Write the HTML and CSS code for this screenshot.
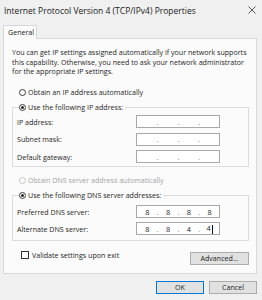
FILE: index.html
```html
<!DOCTYPE html>
<html>
<head>
<meta charset="utf-8">
<link rel="stylesheet" href="styles.css">
</head>
<body>
<div class="window">
  <div class="titlebar">
    <span class="title">Internet Protocol Version 4 (TCP/IPv4) Properties</span>
    <svg class="close" width="8" height="8" viewBox="0 0 8 8"><path d="M0.5 0.5L7.5 7.5M7.5 0.5L0.5 7.5" stroke="#333" stroke-width="0.8" fill="none"/></svg>
  </div>
  <div class="tabs"><div class="tab">General</div></div>
  <div class="panel">
    <p class="intro">You can get IP settings assigned automatically if your network supports this capability. Otherwise, you need to ask your network administrator for the appropriate IP settings.</p>
    <div class="radio-row"><span class="radio"></span>Obtain an IP address automatically</div>
    <fieldset class="group group-ip">
      <legend class="radio-row"><span class="radio checked"></span>Use the following IP address:</legend>
      <div class="field"><span class="label">IP address:</span><span class="ipbox"><span class="seg"></span><span class="dot">.</span><span class="seg"></span><span class="dot">.</span><span class="seg"></span><span class="dot">.</span><span class="seg"></span></span></div>
      <div class="field"><span class="label">Subnet mask:</span><span class="ipbox"><span class="seg"></span><span class="dot">.</span><span class="seg"></span><span class="dot">.</span><span class="seg"></span><span class="dot">.</span><span class="seg"></span></span></div>
      <div class="field"><span class="label">Default gateway:</span><span class="ipbox"><span class="seg"></span><span class="dot">.</span><span class="seg"></span><span class="dot">.</span><span class="seg"></span><span class="dot">.</span><span class="seg"></span></span></div>
    </fieldset>
    <div class="radio-row disabled dns-auto"><span class="radio"></span>Obtain DNS server address automatically</div>
    <fieldset class="group group-dns">
      <legend class="radio-row"><span class="radio checked"></span>Use the following DNS server addresses:</legend>
      <div class="field"><span class="label">Preferred DNS server:</span><span class="ipbox"><span class="seg">8</span><span class="dot">.</span><span class="seg">8</span><span class="dot">.</span><span class="seg">8</span><span class="dot">.</span><span class="seg">8</span></span></div>
      <div class="field"><span class="label">Alternate DNS server:</span><span class="ipbox"><span class="seg">8</span><span class="dot">.</span><span class="seg">8</span><span class="dot">.</span><span class="seg">4</span><span class="dot">.</span><span class="seg">4<span class="caret"></span></span></span></div>
    </fieldset>
    <div class="bottom-row">
      <div class="check-row"><span class="checkbox"></span>Validate settings upon exit</div>
      <button class="btn advanced">Advanced...</button>
    </div>
  </div>
  <div class="actions">
    <button class="btn ok">OK</button>
    <button class="btn">Cancel</button>
  </div>
</div>
</body>
</html>
```

FILE: styles.css
```css
html, body {
  margin: 0;
  padding: 0;
}
body {
  width: 262px;
  height: 300px;
  overflow: hidden;
  background: #f0f0f0;
  font-family: "Open Sans", "Noto Sans", sans-serif;
  font-size: 7.1px;
  color: #1e1e1e;
}
.window {
  display: flex;
  flex-direction: column;
  height: 300px;
}
.titlebar {
  height: 20px;
  display: flex;
  align-items: center;
  justify-content: space-between;
  padding: 0 6px 0 4px;
  font-size: 8.5px;
  color: #222;
}
.close {
  display: block;
}
.tabs {
  display: flex;
  padding-left: 3px;
  margin-top: 5px;
}
.tab {
  position: relative;
  height: 13px;
  line-height: 12px;
  padding: 0 4px;
  width: 24px;
  border: 1px solid #d6d6d6;
  border-bottom: none;
  background: #fbfbfb;
  margin-bottom: -1px;
  color: #222;
}
.panel {
  margin: 0 5px 0 3px;
  height: 236px;
  box-sizing: border-box;
  border: 1px solid #d9d9d9;
  background: #fbfbfb;
  padding: 9px 7px 0 8px;
  display: flex;
  flex-direction: column;
}
.intro {
  margin: 0;
  line-height: 9.5px;
  padding-left: 0;
}
.radio-row {
  display: flex;
  align-items: center;
  height: 11px;
  line-height: 11px;
  white-space: nowrap;
}
.panel > .radio-row {
  margin-left: 7px;
}
.intro + .radio-row {
  margin-top: 10px;
}
.radio {
  box-sizing: border-box;
  width: 7px;
  height: 7px;
  border: 1px solid #3a3a3a;
  border-radius: 50%;
  background: #fff;
  margin-right: 2px;
  display: flex;
  align-items: center;
  justify-content: center;
  flex: none;
}
.radio.checked::after {
  content: "";
  width: 3px;
  height: 3px;
  border-radius: 50%;
  background: #222;
}
.disabled {
  color: #a3a3a3;
}
.disabled .radio {
  border-color: #c4c4c4;
}
.group {
  margin: 4px 0 0 0;
  border: 1px solid #dcdcdc;
  padding: 0 0 3px 4px;
  min-width: 0;
}
.group legend {
  padding: 0 2px 0 0;
  margin-left: 2px;
}
.group-ip {
  padding-top: 2.5px;
}
.group-dns {
  padding-top: 4.5px;
  padding-bottom: 5px;
}
.field {
  display: flex;
  align-items: center;
  height: 13px;
}
.group-ip .field + .field {
  margin-top: 4.5px;
}
.group-dns .field + .field {
  margin-top: 4px;
}
.label {
  width: 119px;
  flex: none;
}
.ipbox {
  box-sizing: border-box;
  width: 84px;
  height: 13px;
  border: 1px solid #a8a8a8;
  background: #fff;
  display: flex;
  align-items: center;
  padding-left: 1px;
  font-size: 7.4px;
}
.seg {
  width: 19px;
  text-align: center;
}
.dot {
  width: 2px;
  text-align: center;
  color: #777;
}
.caret {
  display: inline-block;
  width: 1px;
  height: 9px;
  background: #111;
  vertical-align: middle;
  margin-left: 1px;
}
.dns-auto {
  margin-top: 7.5px;
}
.bottom-row {
  display: flex;
  justify-content: space-between;
  align-items: flex-start;
  margin-top: 10px;
}
.check-row {
  display: flex;
  align-items: center;
  height: 8px;
  margin-left: 9px;
  white-space: nowrap;
}
.checkbox {
  box-sizing: border-box;
  width: 8px;
  height: 8px;
  border: 1px solid #333;
  background: #fff;
  margin-right: 3px;
  flex: none;
}
.btn {
  box-sizing: border-box;
  height: 13px;
  border: 1px solid #adadad;
  background: #e1e1e1;
  font-family: inherit;
  font-size: 7.1px;
  color: #1e1e1e;
  padding: 0;
  margin: 0;
  line-height: 11px;
}
.advanced {
  width: 59px;
  margin-top: 1px;
}
.actions {
  display: flex;
  justify-content: flex-end;
  gap: 5px;
  padding-right: 5px;
  margin-top: 7px;
}
.actions .btn {
  width: 48px;
}
.btn.ok {
  border-color: #0078d7;
}
```
